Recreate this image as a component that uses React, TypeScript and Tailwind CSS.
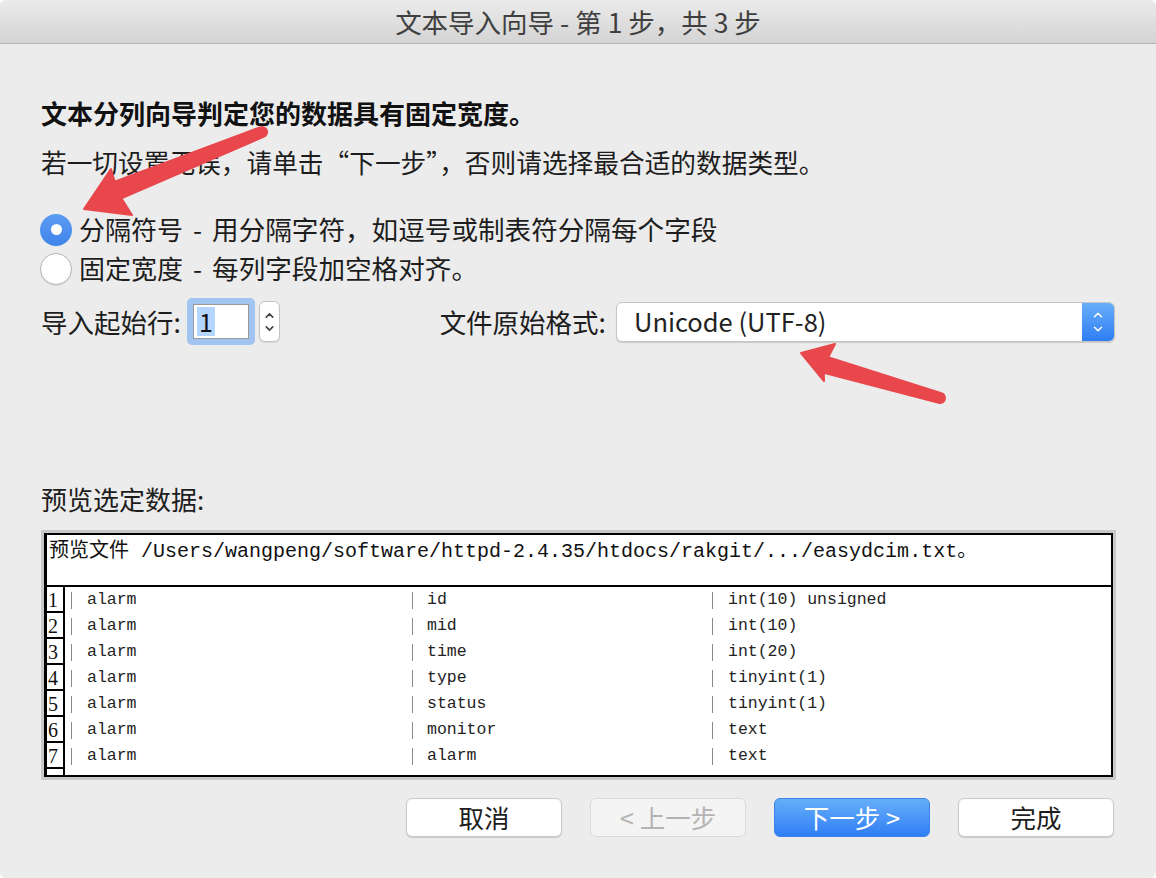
import { ChevronDown, ChevronUp } from "lucide-react";

const ui = "font-['Noto_Sans_CJK_SC','Noto_Sans',sans-serif]";
const mono = "font-['Liberation_Mono','Noto_Sans_CJK_SC',monospace]";

const rows = [
  ["alarm", "id", "int(10) unsigned"],
  ["alarm", "mid", "int(10)"],
  ["alarm", "time", "int(20)"],
  ["alarm", "type", "tinyint(1)"],
  ["alarm", "status", "tinyint(1)"],
  ["alarm", "monitor", "text"],
  ["alarm", "alarm", "text"],
];

function Radio({ on, name, hint }: { on?: boolean; name: string; hint: string }) {
  return (
    <div className="flex items-center h-[39px]">
      {on ? (
        <span className="w-[32px] h-[32px] rounded-full bg-gradient-to-b from-[#5c9cf2] to-[#3f84ec] flex items-center justify-center">
          <span className="w-[11px] h-[11px] rounded-full bg-white" />
        </span>
      ) : (
        <span className="w-[32px] h-[32px] rounded-full bg-white border border-[#b5b5b5] shadow-[0_1px_1px_rgba(0,0,0,0.08)]" />
      )}
      <span className="ml-[7px] text-[26px] text-[#1d1d1d] leading-none">
        {name}
        <span className="mx-[10px]">-</span>
        <span className="text-[26.6px]">{hint}</span>
      </span>
    </div>
  );
}

function Button({ label, kind }: { label: string; kind?: "primary" | "disabled" }) {
  const base = "w-[156px] h-[39px] rounded-[6px] flex items-center justify-center text-[25.5px] leading-none pb-[2px]";
  if (kind === "primary")
    return (
      <div className={`${base} bg-gradient-to-b from-[#66aefa] to-[#2f7ef4] text-white border border-[#3a82ee]`}>
        {label}
      </div>
    );
  if (kind === "disabled")
    return (
      <div className={`${base} bg-[#f4f4f4] text-[#b3b3b3] border border-[#d9d9d9]`}>{label}</div>
    );
  return (
    <div className={`${base} bg-white text-[#1d1d1d] border border-[#c8c8c8] shadow-[0_1px_1px_rgba(0,0,0,0.15)]`}>
      {label}
    </div>
  );
}

function Arrows() {
  return (
    <svg className="absolute inset-0 pointer-events-none" width="1156" height="878">
      <g fill="#e8474c" stroke="#e8474c" strokeWidth="2" strokeLinejoin="round">
        <path d="M84,209 L111,169 L114.6,181.6 L260,127.4 A5,5 0 0 1 264,136.6 L121.4,198.4 L132,215 Z" />
        <path d="M801,353 L835,344 L828.2,357.3 L941.4,393.2 A5,5 0 0 1 938.6,402.8 L823.8,372.7 L824,381 Z" />
      </g>
    </svg>
  );
}

export default function App() {
  return (
    <div className={`${ui} relative w-[1156px] h-[878px] bg-[#ececec] rounded-[6px] overflow-hidden`}>
      <div className="h-[44px] bg-gradient-to-b from-[#ebebeb] to-[#d4d4d4] border-b border-[#b3b3b3] flex items-center justify-center text-[26.5px] text-[#3f3f3f]">
        文本导入向导 - 第 1 步，共 3 步
      </div>

      <div className="px-[41px] flex flex-col">
        <div className="mt-[50px] h-[36px] flex items-center text-[26px] font-bold text-[#111]">
          文本分列向导判定您的数据具有固定宽度。
        </div>
        <div className="mt-[14px] h-[36px] flex items-center text-[25.7px] text-[#1d1d1d]">
          若一切设置无误，请单击“下一步”，否则请选择最合适的数据类型。
        </div>

        <div className="mt-[30px] -ml-[1px]">
          <Radio on name="分隔符号" hint="用分隔字符，如逗号或制表符分隔每个字段" />
          <Radio name="固定宽度" hint="每列字段加空格对齐。" />
        </div>

        <div className="mt-[10px] h-[47px] flex items-center">
          <span className="text-[26.5px] text-[#1d1d1d]">导入起始行:</span>
          <div className="ml-[6px] w-[68px] h-[47px] rounded-[5px] bg-[#a2c4f1] p-[6px]">
            <div className="w-full h-full bg-white border border-[#9a9a9a] flex items-center pl-[3px]">
              <span className="bg-[#b4d5fe] text-[25px] leading-[29px] px-[2px] text-[#111]">1</span>
            </div>
          </div>
          <div className="ml-[4px] w-[21px] h-[41px] bg-white border border-[#c3c3c3] rounded-[6px] flex flex-col items-center justify-center text-[#444] shadow-[0_1px_1px_rgba(0,0,0,0.1)]">
            <ChevronUp size={13} strokeWidth={3} />
            <ChevronDown size={13} strokeWidth={3} />
          </div>

          <div className="ml-auto flex items-center">
            <span className="text-[26.5px] text-[#1d1d1d]">文件原始格式:</span>
            <div className="ml-[10px] w-[499px] h-[40px] bg-white border border-[#c6c6c6] rounded-[6px] shadow-[0_1px_1px_rgba(0,0,0,0.15)] flex items-center overflow-hidden">
              <span className="pl-[17px] flex-1 text-[25.5px] text-[#222]">Unicode (UTF-8)</span>
              <div className="w-[32px] h-full bg-gradient-to-b from-[#68aefa] to-[#2e7df3] flex flex-col items-center justify-center text-white">
                <ChevronUp size={14} strokeWidth={2.5} />
                <ChevronDown size={14} strokeWidth={2.5} />
              </div>
            </div>
          </div>
        </div>

        <div className="mt-[135px] h-[36px] flex items-center text-[26px] text-[#1d1d1d]">预览选定数据:</div>

        <div className="mt-[14px] w-[1075px] h-[250px] border-[3px] border-[#c8c8c8]">
          <div className={`${mono} h-full border-2 border-l-[3px] border-black bg-white flex flex-col overflow-hidden`}>
            <div className="h-[52px] shrink-0 pl-[2px] pt-[4px] text-[20px] leading-[26px] text-[#111] border-b-2 border-black">
              预览文件 /Users/wangpeng/software/httpd-2.4.35/htdocs/rakgit/.../easydcim.txt。
            </div>
            {rows.map((r, i) => (
              <div key={i} className="flex h-[26px] shrink-0 items-center">
                <div className="w-[18px] h-[26px] border-r-2 border-b-2 border-black flex items-end pl-[1px] font-['Liberation_Serif',serif] text-[20px] leading-[22px] text-[#111]">
                  {i + 1}
                </div>
                <div className="ml-[6px] w-[341px] flex items-center pt-[1px]">
                  <span className="w-px h-[17px] bg-[#8a8a8a]" />
                  <span className="ml-[15px] text-[16.5px] text-[#222]">{r[0]}</span>
                </div>
                <div className="w-[300px] flex items-center pt-[1px]">
                  <span className="w-px h-[17px] bg-[#8a8a8a]" />
                  <span className="ml-[14px] text-[16.5px] text-[#222]">{r[1]}</span>
                </div>
                <div className="flex-1 flex items-center pt-[1px]">
                  <span className="w-px h-[17px] bg-[#8a8a8a]" />
                  <span className="ml-[15px] text-[16.5px] text-[#222]">{r[2]}</span>
                </div>
              </div>
            ))}
            <div className="w-[18px] flex-1 border-r-2 border-black" />
          </div>
        </div>

        <div className="mt-[18px] flex justify-end gap-[28px] pr-[1px]">
          <Button label="取消" />
          <Button label="< 上一步" kind="disabled" />
          <Button label="下一步 >" kind="primary" />
          <Button label="完成" />
        </div>
      </div>

      <Arrows />
    </div>
  );
}
